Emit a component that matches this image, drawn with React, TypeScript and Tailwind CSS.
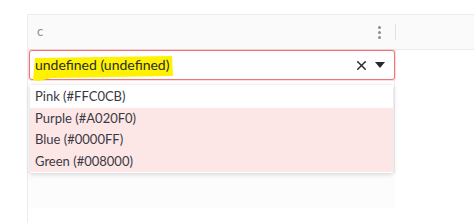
import { X } from "lucide-react";

const options = [
  { label: "Pink (#FFC0CB)", active: true },
  { label: "Purple (#A020F0)", active: false },
  { label: "Blue (#0000FF)", active: false },
  { label: "Green (#008000)", active: false },
];

export default function App() {
  return (
    <div className="w-[474px] h-[223px] bg-white overflow-hidden pt-[14px] pl-[27px] font-['Lato','Noto_Sans',sans-serif]">
      <div className="relative h-[209px] border-l border-[#ececef]">
        {/* header */}
        <div className="flex h-[36px] items-center border-t border-b border-[#ececef] bg-[#fafafb]">
          <div className="flex w-[367px] items-center pl-[9px] pr-[14px]">
            <span className="flex-1 text-[13px] text-[#8c8c94]">c</span>
            <div className="flex flex-col gap-[2px]">
              <span className="h-[3px] w-[3px] rounded-full bg-[#8c8c94]" />
              <span className="h-[3px] w-[3px] rounded-full bg-[#8c8c94]" />
              <span className="h-[3px] w-[3px] rounded-full bg-[#8c8c94]" />
            </div>
          </div>
          <div className="h-[16px] w-px bg-[#e3e3e7]" />
        </div>

        {/* body rows */}
        <div className="flex h-[122px] w-[367px] border-r border-[#f0f0f2]" />
        <div className="h-[36px] w-[367px] border-t border-[#efeff2] bg-[#fcfcfd]" />

        {/* editor overlay */}
        <div className="absolute left-[1px] top-[36px] w-[366px]">
          <div className="relative flex h-[30px] items-center rounded-[3px] border border-[#f07474] bg-white pl-[5px] pr-[9px] shadow-[0_0_0_1px_rgba(240,116,116,0.25)]">
            <svg
              className="absolute left-[1px] top-[4px]"
              width="144"
              height="26"
              viewBox="0 0 144 26"
            >
              <path
                d="M4 3 L141 1 L142 21 L20 23 L8 26 L2 25 L3 14 Z"
                fill="#fff200"
              />
            </svg>
            <span className="relative flex-1 text-[14px] leading-none text-[#2b2b33]">
              undefined (undefined)
            </span>
            <X size={15} strokeWidth={2.2} className="text-[#262730]" />
            <svg className="ml-[6px]" width="10" height="6" viewBox="0 0 10 6">
              <path d="M0 0 L10 0 L5 6 Z" fill="#262730" />
            </svg>
          </div>
          <div className="mx-[1px] mt-[5px] w-[363px] bg-white py-[1px] shadow-[0_1px_5px_rgba(0,0,0,0.18)]">
            {options.map((o) => (
              <div
                key={o.label}
                className={
                  "flex h-[21.5px] items-center pl-[5px] text-[13px] text-[#3a3a44] " +
                  (o.active ? "bg-white" : "bg-[#fde6e6]")
                }
              >
                {o.label}
              </div>
            ))}
          </div>
        </div>
      </div>
    </div>
  );
}
